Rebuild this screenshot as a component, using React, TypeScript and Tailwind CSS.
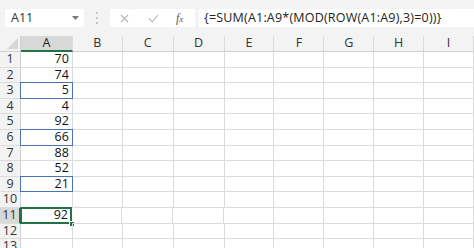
import React from "react";

const cols = [
  { l: "A", w: "w-[52px]" },
  { l: "B", w: "w-[50px]" },
  { l: "C", w: "w-[51px]" },
  { l: "D", w: "w-[51px]" },
  { l: "E", w: "w-[50px]" },
  { l: "F", w: "w-[50px]" },
  { l: "G", w: "w-[50px]" },
  { l: "H", w: "w-[50px]" },
  { l: "I", w: "w-[50px]" },
];

const rows: { n: number; v: string; h: string; blue?: boolean; active?: boolean }[] = [
  { n: 1, v: "70", h: "h-[16px]" },
  { n: 2, v: "74", h: "h-[15px]" },
  { n: 3, v: "5", h: "h-[16px]", blue: true },
  { n: 4, v: "4", h: "h-[15px]" },
  { n: 5, v: "92", h: "h-[16px]" },
  { n: 6, v: "66", h: "h-[16px]", blue: true },
  { n: 7, v: "88", h: "h-[15px]" },
  { n: 8, v: "52", h: "h-[16px]" },
  { n: 9, v: "21", h: "h-[15px]", blue: true },
  { n: 10, v: "", h: "h-[16px]" },
  { n: 11, v: "92", h: "h-[16px]", active: true },
  { n: 12, v: "", h: "h-[15px]" },
  { n: 13, v: "", h: "h-[16px]" },
];

export default function App() {
  return (
    <div className="w-[474px] h-[248px] overflow-hidden bg-white font-['Open_Sans','Liberation_Sans',sans-serif] text-[12px] text-[#222]">
      {/* toolbar */}
      <div className="h-[36px] bg-[#f3f3f3] flex items-start pt-[9px] pl-[5px]">
        <div className="w-[79px] h-[18px] bg-white flex items-center justify-between pl-[6px] pr-[5px]">
          <span className="text-[12.5px] leading-none text-[#333]">A11</span>
          <svg width="7" height="4" viewBox="0 0 7 4"><path d="M0 0h7L3.5 4z" fill="#777" /></svg>
        </div>
        <div className="ml-[12px] mt-[3px] h-[12px] w-[2px] flex flex-col justify-between">
          <div className="h-[2px] w-[2px] bg-[#c8c8c8]" />
          <div className="h-[2px] w-[2px] bg-[#c8c8c8]" />
          <div className="h-[2px] w-[2px] bg-[#c8c8c8]" />
        </div>
        <div className="ml-[12px] w-[85px] h-[18px] bg-white flex items-center">
          <svg className="ml-[10px]" width="9" height="9" viewBox="0 0 9 9"><path d="M1 1l7 7M8 1l-7 7" stroke="#b5b5b5" strokeWidth="1.1" /></svg>
          <svg className="ml-[19px]" width="11" height="9" viewBox="0 0 11 9"><path d="M1 4.5l3.2 3.3L10 1" stroke="#b5b5b5" strokeWidth="1.1" fill="none" /></svg>
          <span className="ml-[17px] italic font-['Liberation_Serif',serif] text-[12px] leading-none text-[#555]">
            f<span className="text-[9px]">x</span>
          </span>
        </div>
        <div className="ml-[4px] flex-1 h-[18px] bg-white flex items-center pl-[5px]">
          <span className="text-[12.5px] leading-none text-[#222] tracking-[0.2px]">{"{=SUM(A1:A9*(MOD(ROW(A1:A9),3)=0))}"}</span>
        </div>
      </div>
      {/* column headers */}
      <div className="flex h-[16px] bg-[#f3f3f3]">
        <div className="w-[21px] h-full border-r border-b border-[#d0d0d0] flex items-end justify-end pr-[2px] pb-[2px]">
          <svg width="11" height="11" viewBox="0 0 11 11"><path d="M11 0V11H0z" fill="#d6d6d6" /></svg>
        </div>
        {cols.map((c, i) => (
          <div
            key={c.l}
            className={
              (i === 0
                ? "bg-[#d8d8d8] border-b-2 border-b-[#217346] text-[#222] "
                : "border-b border-b-[#d0d0d0] text-[#333] ") +
              c.w +
              " h-full border-r border-r-[#dadada] flex items-center justify-center text-[12.5px] leading-none"
            }
          >
            {c.l}
          </div>
        ))}
      </div>
      {/* rows */}
      {rows.map((r) => (
        <div key={r.n} className={"flex " + r.h}>
          <div
            className={
              (r.active
                ? "bg-[#d8d8d8] border-r-2 border-r-[#217346] "
                : "bg-[#f3f3f3] border-r border-r-[#d0d0d0] ") +
              "w-[21px] h-full border-b border-b-[#dcdcdc] flex items-center justify-center text-[12.5px] leading-none text-[#333]"
            }
          >
            {r.n}
          </div>
          {cols.map((c, i) => (
            <div
              key={c.l}
              className={
                (i === 0 && r.active ? "w-[51px] " : c.w + " ") +
                "relative h-full border-r border-b border-[#dcdcdc] flex items-center justify-end pr-[3px] text-[12.5px] leading-none text-[#111]"
              }
            >
              {i === 0 ? r.v : ""}
              {i === 0 && r.blue && (
                <div className="absolute left-[-1px] top-[-1px] right-[-1px] bottom-[-1px] border-[1.5px] border-[#4a74b5]" />
              )}
              {i === 0 && r.active && (
                <>
                  <div className="absolute left-[-1px] top-[-1px] right-[-1px] bottom-[-1px] border-2 border-[#217346]" />
                  <div className="absolute right-[-4px] bottom-[-4px] w-[6px] h-[6px] bg-[#217346] border border-white" />
                </>
              )}
            </div>
          ))}
        </div>
      ))}
    </div>
  );
}
